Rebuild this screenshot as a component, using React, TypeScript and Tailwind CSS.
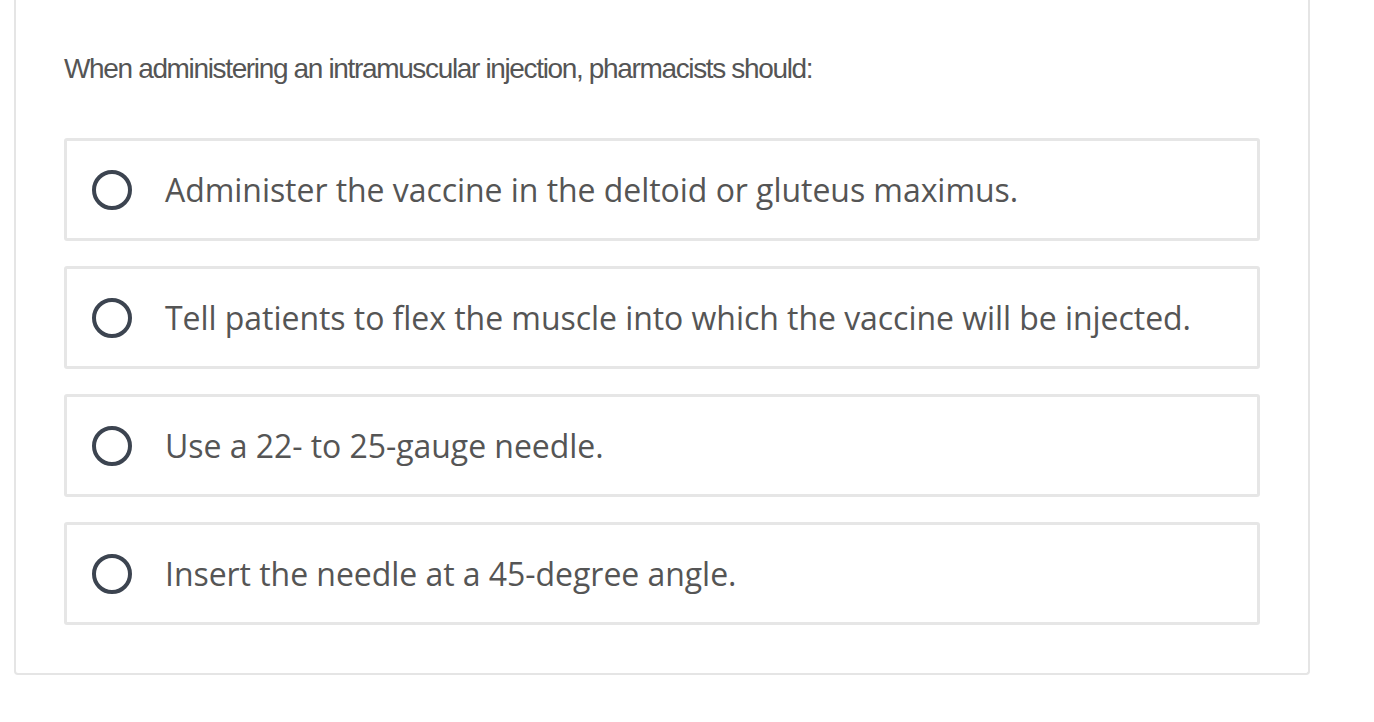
import React from 'react';

const options = [
  'Administer the vaccine in the deltoid or gluteus maximus.',
  'Tell patients to flex the muscle into which the vaccine will be injected.',
  'Use a 22- to 25-gauge needle.',
  'Insert the needle at a 45-degree angle.',
];

const App: React.FC = () => {
  return (
    <div className="min-h-[722px] bg-white pl-[14px] pr-[64px]">
      <div className="w-[1296px] rounded-b-[4px] border-2 border-t-0 border-[#e5e5e5] px-[48px] pb-[48px] pt-[49px]">
        <p className="font-['Liberation_Sans',Arial,sans-serif] text-[28px] leading-[40px] tracking-[-1.35px] text-[#555555]">
          When administering an intramuscular injection, pharmacists should:
        </p>
        <div className="mt-[49px] flex flex-col gap-[25px]">
          {options.map((opt) => (
            <label
              key={opt}
              className="flex h-[103px] items-center rounded-[3px] border-[3px] border-[#e6e6e6] pl-[25px]"
            >
              <span className="h-[40px] w-[40px] shrink-0 rounded-full border-[4px] border-[#3c4450]" />
              <span className="ml-[33px] font-['Open_Sans',sans-serif] text-[32px] tracking-[-0.05px] text-[#555555]">
                {opt}
              </span>
            </label>
          ))}
        </div>
      </div>
    </div>
  );
};

export default App;
